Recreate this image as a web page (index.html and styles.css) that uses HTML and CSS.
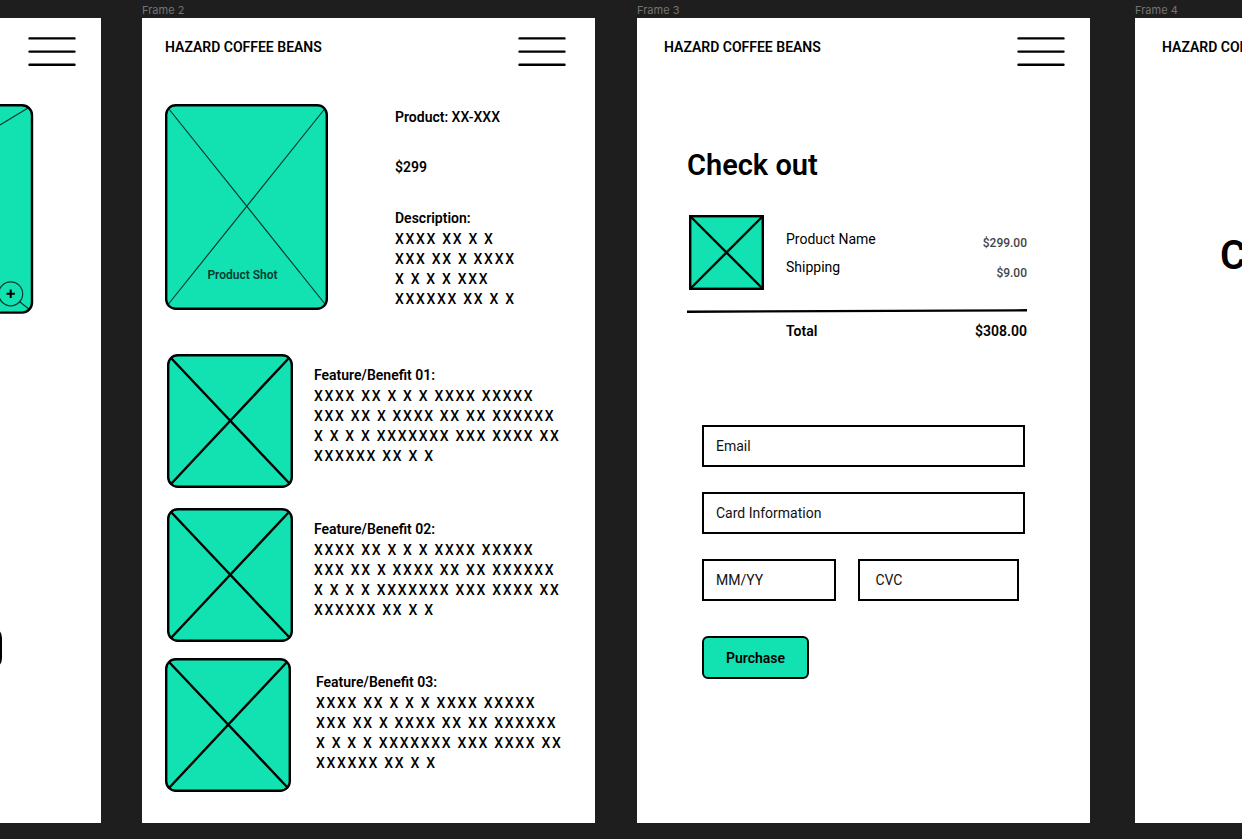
FILE: index.html
```html
<!DOCTYPE html>
<html lang="en">
<head>
  <meta charset="UTF-8" />
  <meta name="viewport" content="width=device-width, initial-scale=1" />
  <title>Hazard Coffee Beans</title>
  <link rel="stylesheet" href="styles.css">
</head>
<body>
  <div class="canvas">

    <section class="board board-cut-left">
      <div class="frame-label"></div>
      <div class="frame">
        <header class="header header-menu-only">
          <button class="menu" type="button" aria-label="Menu">
            <svg width="48" height="30" viewBox="0 0 48 30"><path d="M1.5 1.4h45M1.5 14.6h45M1.5 27.8h45" /></svg>
          </button>
        </header>
        <svg class="shot-cut" width="34" height="210" viewBox="0 0 34 210">
          <rect class="box" x="-120" y="1.2" width="152" height="207.4" rx="10" />
          <path class="thin" d="M28 4L0 21M20 198l9.500 7.500" />
          <circle class="thin" cx="10.700" cy="189.800" r="12" />
          <path class="plus" d="M6.500 189.800h8.400M10.700 185.600v8.400" />
        </svg>
        <svg class="button-cut" width="4" height="34" viewBox="0 0 4 34"><path d="M0 .5Q2 3 2 7v20q0 4-2 6.500z" /></svg>
      </div>
    </section>

    <section class="board board-product">
      <div class="frame-label">Frame 2</div>
      <div class="frame">
        <header class="header header-product">
          <div class="brand">HAZARD COFFEE BEANS</div>
          <button class="menu" type="button" aria-label="Menu">
            <svg width="48" height="30" viewBox="0 0 48 30"><path d="M1.5 1.4h45M1.5 14.6h45M1.5 27.8h45" /></svg>
          </button>
        </header>

        <div class="hero">
          <div class="shot">
            <svg width="163" height="206" viewBox="0 0 163 206">
              <rect class="box" x="1.2" y="1.2" width="160.600" height="203.600" rx="9.500" />
              <path class="thin" d="M3.500 4.500L160 200M160 4.500L3.500 200" />
            </svg>
            <span class="shot-label">Product Shot</span>
          </div>
          <div class="info">
            <p class="info-line"><strong>Product</strong>: XX-XXX</p>
            <p class="info-line"><strong>$299</strong></p>
            <h3>Description:</h3>
            <p class="filler">XXXX XX X X<br>XXX XX X XXXX<br>X X X X XXX<br>XXXXXX XX X X</p>
          </div>
        </div>

        <div class="features">
          <div class="feature">
            <svg width="126" height="134" viewBox="0 0 126 134">
              <rect class="box" x="1.2" y="1.2" width="123.600" height="131.600" rx="9.500" />
              <path class="cross" d="M4 4l119 126M122 4L4 130" />
            </svg>
            <div class="feature-text">
              <h3>Feature/Benefit 01:</h3>
              <p class="filler">XXXX XX X X X XXXX XXXXX<br>XXX XX X XXXX XX XX XXXXXX<br>X X X X XXXXXXX XXX XXXX XX<br>XXXXXX XX X X</p>
            </div>
          </div>
          <div class="feature">
            <svg width="126" height="134" viewBox="0 0 126 134">
              <rect class="box" x="1.2" y="1.2" width="123.600" height="131.600" rx="9.500" />
              <path class="cross" d="M4 4l119 126M122 4L4 130" />
            </svg>
            <div class="feature-text">
              <h3>Feature/Benefit 02:</h3>
              <p class="filler">XXXX XX X X X XXXX XXXXX<br>XXX XX X XXXX XX XX XXXXXX<br>X X X X XXXXXXX XXX XXXX XX<br>XXXXXX XX X X</p>
            </div>
          </div>
          <div class="feature feature-last">
            <svg width="126" height="134" viewBox="0 0 126 134">
              <rect class="box" x="1.2" y="1.2" width="123.600" height="131.600" rx="9.500" />
              <path class="cross" d="M4 4l119 126M122 4L4 130" />
            </svg>
            <div class="feature-text">
              <h3>Feature/Benefit 03:</h3>
              <p class="filler">XXXX XX X X X XXXX XXXXX<br>XXX XX X XXXX XX XX XXXXXX<br>X X X X XXXXXXX XXX XXXX XX<br>XXXXXX XX X X</p>
            </div>
          </div>
        </div>
      </div>
    </section>

    <section class="board board-checkout">
      <div class="frame-label">Frame 3</div>
      <div class="frame">
        <header class="header">
          <div class="brand">HAZARD COFFEE BEANS</div>
          <button class="menu" type="button" aria-label="Menu">
            <svg width="48" height="30" viewBox="0 0 48 30"><path d="M1.5 1.4h45M1.5 14.6h45M1.5 27.8h45" /></svg>
          </button>
        </header>

        <div class="order">
          <h1>Check out</h1>
          <div class="order-items">
            <svg width="75" height="75" viewBox="0 0 75 75">
              <rect class="box" x="1.2" y="1.2" width="72.600" height="72.600" />
              <path class="cross" d="M2 2l71 71M73 2L2 73" />
            </svg>
            <div class="names">
              <div>Product Name</div>
              <div>Shipping</div>
            </div>
            <div class="prices">
              <div>$299.00</div>
              <div>$9.00</div>
            </div>
          </div>
          <svg class="rule" height="4" viewBox="0 0 340 4" preserveAspectRatio="none"><path d="M0 2.700L340 1.300" /></svg>
          <div class="total">
            <span>Total</span>
            <span>$308.00</span>
          </div>
        </div>

        <form class="payment">
          <input name="email" type="email" placeholder="Email" aria-label="Email" />
          <input name="card" type="text" placeholder="Card Information" aria-label="Card Information" />
          <div class="card-row">
            <input class="expiry" name="expiry" type="text" placeholder="MM/YY" aria-label="MM/YY" />
            <input class="cvc" name="cvc" type="text" placeholder="CVC" aria-label="CVC" />
          </div>
          <button class="purchase" type="submit">Purchase</button>
        </form>
      </div>
    </section>

    <section class="board board-cut-right">
      <div class="frame-label">Frame 4</div>
      <div class="frame">
        <header class="header">
          <div class="brand">HAZARD COFFEE BEANS</div>
        </header>
        <h1 class="big">C</h1>
      </div>
    </section>

  </div>
</body>
</html>
```
FILE: styles.css
```css
* {
  box-sizing: border-box;
}
body {
  margin: 0;
  background: #1e1e1e;
  color: #000;
  font-family: Roboto, Arial, sans-serif;
  font-size: 14px;
  line-height: 20px;
}
h1, h3, p {
  margin: 0;
}
svg {
  display: block;
  flex: none;
}

/* canvas and boards */
.canvas {
  display: flex;
  min-height: 100vh;
  padding-bottom: 16px;
  overflow: hidden;
}
.board {
  display: flex;
  flex-direction: column;
  flex: 1;
  min-width: 0;
}
.board-cut-left {
  flex: 0 0 101px;
}
.board-product {
  margin-left: 41px;
}
.board-checkout {
  margin-left: 42px;
}
.board-cut-right {
  flex: 0 0 107px;
  margin-left: 45px;
}
.frame-label {
  height: 18px;
  color: #747474;
  font-family: Inter, sans-serif;
  font-size: 11px;
  line-height: 20px;
}
.frame {
  flex: 1;
  background: #fff;
  overflow: hidden;
}

/* header */
.header {
  display: flex;
  justify-content: space-between;
  height: 86px;
  padding: 19px 25px 0 27px;
}
.header-menu-only {
  justify-content: flex-end;
}
.header-product {
  padding: 19px 29px 0 23px;
}
.brand {
  font-weight: 600;
  font-size: 14px;
  white-space: nowrap;
}
.menu {
  width: 48px;
  height: 30px;
  padding: 0;
  border: none;
  background: none;
  cursor: pointer;
}
.menu path {
  stroke: #000;
  stroke-width: 2.4;
  stroke-linecap: round;
}

/* placeholder pictures */
.box {
  fill: #12e2b2;
  stroke: #000;
  stroke-width: 2.4;
}
.cross {
  stroke: #000;
  stroke-width: 2.4;
}
.thin {
  fill: none;
  stroke: #000;
  stroke-opacity: 0.75;
  stroke-width: 1.2;
}
.plus {
  stroke: #000;
  stroke-width: 2;
}
.button-cut {
  margin-top: 317px;
}

/* product board */
.hero {
  display: flex;
  gap: 67px;
  padding-left: 23px;
}
.shot {
  position: relative;
}
.shot-label {
  position: absolute;
  left: 0;
  right: 0;
  bottom: 25px;
  padding-right: 8px;
  color: #033b2e;
  font-size: 12px;
  font-weight: 600;
  text-align: center;
}
.info {
  padding-top: 3px;
}
.info-line {
  margin-bottom: 30px;
  font-weight: 500;
}
h3 {
  font-size: 14px;
  font-weight: 600;
  line-height: 22px;
}
strong {
  font-weight: 600;
}
.filler {
  font-size: 14px;
  font-weight: 500;
  letter-spacing: 0.12em;
}
.features {
  padding: 44px 0 0 25px;
}
.feature {
  display: flex;
  gap: 21px;
  margin-bottom: 20px;
}
.feature-text {
  padding-top: 10px;
  white-space: nowrap;
}
.feature-last {
  gap: 25px;
  margin: -4px 0 0 -2px;
}
.feature-last .feature-text {
  padding-top: 13px;
}

/* checkout board */
.order {
  padding: 41px 63px 0 50px;
}
h1 {
  font-size: 29px;
  font-weight: 600;
  line-height: 40px;
}
.order-items {
  display: flex;
  margin-top: 30px;
  padding-left: 2px;
}
.names {
  padding: 10px 0 0 22px;
  line-height: 28px;
}
.prices {
  margin-left: auto;
  padding-top: 13px;
  color: #444;
  font-size: 12px;
  font-weight: 500;
  line-height: 30px;
  text-align: right;
}
.rule {
  width: 100%;
  margin-top: 19px;
}
.rule path {
  stroke: #000;
  stroke-width: 2.4;
}
.total {
  display: flex;
  justify-content: space-between;
  padding: 8px 0 0 99px;
  font-weight: 600;
}
.payment {
  padding: 84px 65px 0;
}
.payment input {
  display: block;
  width: 100%;
  height: 42px;
  margin-bottom: 25px;
  padding: 0 12px;
  border: 2px solid #000;
  border-radius: 0;
  background: #fff;
  font-family: inherit;
  font-size: 14px;
}
.payment input::placeholder {
  color: #111;
  opacity: 1;
}
.card-row {
  display: flex;
  gap: 22px;
  padding-right: 6px;
}
.payment .expiry {
  flex: 133;
  width: 0;
}
.payment .cvc {
  flex: 162;
  width: 0;
  padding-left: 15px;
}
.purchase {
  height: 43px;
  margin-top: 10px;
  padding: 0 22px;
  border: 2px solid #000;
  border-radius: 6px;
  background: #12e2b2;
  color: #000;
  font-family: inherit;
  font-size: 14px;
  font-weight: 600;
  cursor: pointer;
}

/* last board */
.big {
  padding: 128px 0 0 85px;
  font-size: 40px;
  font-weight: 600;
  line-height: 48px;
}
```
